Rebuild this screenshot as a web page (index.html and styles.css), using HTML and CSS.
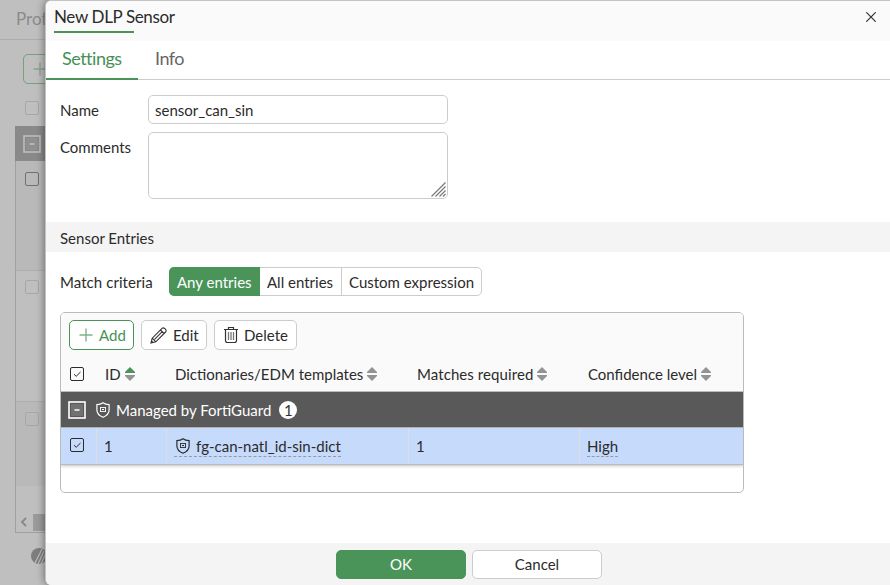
FILE: index.html
```html
<!DOCTYPE html>
<html lang="en">
<head>
    <meta charset="UTF-8">
    <title>New DLP Sensor</title>
    <link rel="stylesheet" href="styles.css">
</head>
<body>
<svg class="symbols">
    <symbol id="tick" viewBox="0 0 14 14">
        <rect x=".5" y=".5" width="13" height="13" rx="1.5" fill="none" stroke="currentColor"/>
        <path d="M4 7.2l2.2 2.1L10.5 5" fill="none" stroke="currentColor"/>
    </symbol>
    <symbol id="box" viewBox="0 0 14 14">
        <rect x=".5" y=".5" width="13" height="13" rx="1.5" fill="none" stroke="currentColor"/>
    </symbol>
    <symbol id="minus" viewBox="0 0 18 18">
        <rect x="3" y="3" width="12" height="12" rx="1" fill="currentColor" opacity=".15"/>
        <rect x="1" y="1" width="16" height="16" fill="none" stroke="currentColor" stroke-width="1.6"/>
        <path d="M6.500 9h5" stroke="currentColor" stroke-width="1.6"/>
    </symbol>
    <symbol id="plus" viewBox="0 0 14 14">
        <path d="M7 .5v13M.5 7h13" stroke="currentColor" stroke-width="1.4"/>
    </symbol>
    <symbol id="shield" viewBox="0 0 14 16">
        <path d="M7 .8C5.3 2.2 3.2 2.7 .9 2.7V8c0 3.6 2.6 5.8 6.1 7.3 3.5-1.5 6.1-3.7 6.1-7.3V2.7C10.8 2.7 8.7 2.2 7 .8z" fill="none" stroke="currentColor" stroke-width="1.2"/>
        <path d="M4.5 5.500h5v4h-5zM4 5l1 1M10 5L9 6M4 10l1-1M10 10L9 9" fill="none" stroke="currentColor" stroke-width=".9"/>
        <path d="M6 7.500h2" stroke="currentColor"/>
    </symbol>
    <symbol id="sort" viewBox="0 0 12 14">
        <path d="M6 0l5 5v1H1V5z"/>
        <path d="M6 14l5-5V8H1v1z"/>
    </symbol>
</svg>

<div class="page">
    <div class="page-title">Prof</div>
    <div class="page-body">
        <div class="page-add"><svg width="14" height="14"><use href="#plus"/></svg></div>
        <div class="page-table">
            <div class="page-head"><svg width="14" height="14"><use href="#box"/></svg></div>
            <div class="page-group"><svg width="18" height="18"><use href="#minus"/></svg></div>
            <div class="page-row current"><svg width="14" height="14"><use href="#box"/></svg></div>
            <div class="page-row middle"><svg width="14" height="14"><use href="#box"/></svg></div>
            <div class="page-row last"><svg width="14" height="14"><use href="#box"/></svg></div>
            <div class="page-scroll">
                <svg width="8" height="10" viewBox="0 0 8 10"><path d="M6 1L2 5l4 4" fill="none" stroke="#888" stroke-width="1.8"/></svg>
                <span class="thumb"></span>
            </div>
        </div>
        <svg class="page-logo" width="16" height="16" viewBox="0 0 16 16">
            <circle cx="8" cy="8" r="8" fill="#7e7e7e"/>
            <path d="M4 15L11 1M7 16l6-13M10 16l5-11" stroke="#bcbcbc" stroke-width="1.2"/>
        </svg>
    </div>
</div>

<form class="panel">
    <div class="panel-header">
        <div class="panel-title">New DLP Sensor</div>
        <svg class="close" width="10" height="10" viewBox="0 0 10 10"><path d="M.3.3l9.4 9.4M9.7.3L.3 9.7" stroke="#333" stroke-width="1.2"/></svg>
    </div>
    <div class="tabs">
        <div class="tab active">Settings</div>
        <div class="tab">Info</div>
    </div>

    <div class="fields">
        <label for="name">Name</label>
        <input type="text" id="name" value="sensor_can_sin">
        <label for="comments">Comments</label>
        <div class="comments-box">
            <textarea id="comments"></textarea>
            <svg class="grip" width="15" height="15" viewBox="0 0 15 15"><path d="M.5 14.5l14-14M4.5 14.5l10-10M8.5 14.5l6-6M12 14.5l2.5-2.5" stroke="#777" stroke-width="1.2"/></svg>
        </div>
    </div>

    <div class="section">Sensor Entries</div>

    <div class="criteria">
        <span class="criteria-label">Match criteria</span>
        <div class="switch">
            <span class="option selected">Any entries</span>
            <span class="option all">All entries</span>
            <span class="option custom">Custom expression</span>
        </div>
    </div>

    <div class="entries">
        <div class="toolbar">
            <div class="button add"><svg width="14" height="14"><use href="#plus"/></svg>Add</div>
            <div class="button edit">
                <svg width="17" height="17" viewBox="0 0 17 17" fill="none" stroke="#333" stroke-width="1.1"><path d="M1 16l1.2-4.8L12 1.4c.8-.8 2-.6 2.8.2l.6.6c.8.8 1 2 .2 2.800L5.8 14.8zM2.2 11.2l3.600 3.6M10.5 3l3.5 3.5M4.5 12.3l7.5-7.5M1 16l2-.5-1.5-1.5z"/></svg>Edit
            </div>
            <div class="button delete">
                <svg width="14" height="16" viewBox="0 0 14 16" fill="none" stroke="#333"><path d="M0 2.5h14M4.5 2.500v-2h5v2M1.5 2.5v11q0 2 2 2h7q2 0 2-2v-11" stroke-width="1.2"/><path d="M4.500 5v8M7 5v8M9.5 5v8" stroke="#777" stroke-width="1.3"/></svg>Delete
            </div>
        </div>
        <div class="row head">
            <div class="cell"><svg width="14" height="14"><use href="#tick"/></svg></div>
            <div class="cell">ID<svg class="sort asc" width="12" height="14" viewBox="0 0 12 14"><path class="up" d="M6 0l5 5v1H1V5z"/><path d="M6 14l5-5V8H1v1z"/></svg></div>
            <div class="cell">Dictionaries/EDM templates<svg class="sort" width="12" height="14"><use href="#sort"/></svg></div>
            <div class="cell matches">Matches required<svg class="sort" width="12" height="14"><use href="#sort"/></svg></div>
            <div class="cell">Confidence level<svg class="sort" width="12" height="14"><use href="#sort"/></svg></div>
        </div>
        <div class="group">
            <svg width="18" height="18"><use href="#minus"/></svg>
            <svg class="shield" width="14" height="16"><use href="#shield"/></svg>
            <span>Managed by FortiGuard</span>
            <span class="count">1</span>
        </div>
        <div class="row data">
            <div class="cell"><svg width="14" height="14"><use href="#tick"/></svg></div>
            <div class="cell">1</div>
            <div class="cell"><span class="ref"><svg width="14" height="16"><use href="#shield"/></svg>fg-can-natl_id-sin-dict</span></div>
            <div class="cell">1</div>
            <div class="cell"><span class="ref">High</span></div>
        </div>
    </div>

    <div class="panel-footer">
        <div class="button ok">OK</div>
        <div class="button cancel">Cancel</div>
    </div>
</form>
</body>
</html>
```
FILE: styles.css
```css
* {
    box-sizing: border-box;
}

body {
    margin: 0;
    height: 585px;
    overflow: hidden;
    position: relative;
    font: 15px/20px Lato, sans-serif;
    color: #2b2b2b;
    background: #bfbfbf;
}

svg {
    flex: none;
    display: block;
}

.symbols {
    display: none;
}

/* dimmed page under the panel */
.page {
    width: 60px;
    height: 585px;
    overflow: hidden;
}

.page-title {
    height: 40px;
    padding: 9px 0 0 16px;
    font-size: 17px;
    color: #8b8b8b;
    border-bottom: 1px solid #adadad;
}

.page-body {
    padding: 14px 0 0 15px;
}

.page-add {
    width: 70px;
    height: 30px;
    margin-left: 8px;
    padding: 7px 9px;
    color: #86a58c;
    border: 1px solid #76a17f;
    border-radius: 5px;
}

.page-table {
    height: 449px;
    border-bottom: 1px solid #a0a0a0;
}

.page-head {
    height: 42px;
    padding: 17px 0 0 10px;
    color: #a7a7a7;
}

.page-group {
    height: 35px;
    padding: 9px 0 0 8px;
    color: #bebebe;
    background: #898989;
}

.page-row {
    padding: 9px 0 0 9px;
    color: #a7a7a7;
    border-left: 1px solid #a0a0a0;
    border-bottom: 1px solid #aeaeae;
}

.page-row.current {
    height: 110px;
    padding-top: 11px;
    color: #707070;
    background: #b9b9b9;
}

.page-row.middle {
    height: 131px;
}

.page-row.last {
    height: 84px;
    padding-top: 10px;
    background: #b9b9b9;
    border-bottom: 0;
}

.page-scroll {
    display: flex;
    align-items: center;
    height: 46px;
    padding: 27px 0 1px 4px;
    border-left: 1px solid #a0a0a0;
}

.thumb {
    width: 30px;
    height: 17px;
    margin-left: 5px;
    background: #9b9b9b;
}

.page-logo {
    margin: 15px 0 0 16px;
}

/* slide-in panel */
.panel {
    position: absolute;
    top: 0;
    right: 0;
    bottom: 0;
    left: 45px;
    display: flex;
    flex-direction: column;
    background: #fff;
    border: 1px solid #c4c4c4;
    border-width: 1px 0 0 1px;
    border-radius: 6px 0 0 6px;
    box-shadow: 0 0 9px rgba(0, 0, 0, .5);
    overflow: hidden;
}

.panel-header {
    display: flex;
    justify-content: space-between;
    height: 40px;
    padding: 6px 14px 0 8px;
    background: #fafafa;
}

.panel-title {
    font-size: 17px;
    letter-spacing: -.35px;
    height: 26px;
    background: linear-gradient(#4a9459, #4a9459) 0 100% / 80px 2px no-repeat;
}

.close {
    margin-top: 5px;
}

.tabs {
    display: flex;
    height: 39px;
    font-size: 18px;
    letter-spacing: -.5px;
    border-bottom: 1px solid #ccc;
}

.tab {
    height: 39px;
    padding: 7px 17px 0;
    color: #666;
}

.tab.active {
    width: 92px;
    padding-left: 16px;
    color: #459155;
    border-bottom: 2px solid #4a9459;
}

.fields {
    display: grid;
    grid-template-columns: 88px 300px;
    row-gap: 8px;
    padding: 15px 14px 23px;
}

.fields label {
    padding-top: 5px;
}

input, textarea {
    display: block;
    width: 300px;
    height: 29px;
    margin: 0;
    padding: 0 7px 0 6px;
    font: inherit;
    color: inherit;
    background: #fff;
    border: 1px solid #ccc;
    border-radius: 5px;
    outline: 0;
    resize: none;
}

textarea {
    height: 67px;
}

.comments-box {
    position: relative;
}

.grip {
    position: absolute;
    right: 2px;
    bottom: 2px;
}

.section {
    height: 30px;
    padding: 6px 14px 0;
    background: #f4f4f4;
}

.criteria {
    display: flex;
    align-items: center;
    padding: 15px 14px 16px;
}

.criteria-label {
    width: 109px;
    letter-spacing: .07px;
}

.switch {
    display: flex;
    height: 29px;
    border: 1px solid #ccc;
    border-radius: 5px;
}

.option {
    padding: 4px 0 0 7px;
    white-space: nowrap;
}

.option.selected {
    width: 91px;
    margin: -1px 0 -1px -1px;
    padding: 5px 0 0 8px;
    color: #fff;
    background: #4a9459;
    border-radius: 5px 0 0 5px;
}

.option.all {
    width: 81px;
}

.option.custom {
    width: 140px;
    border-left: 1px solid #ccc;
}

.entries {
    width: 684px;
    height: 181px;
    margin-left: 14px;
    border: 1px solid #bbb;
    border-radius: 5px;
    overflow: hidden;
}

.toolbar {
    display: flex;
    gap: 7px;
    height: 44px;
    padding: 7px 8px;
    background: #fafafa;
}

.button {
    display: flex;
    align-items: center;
    height: 30px;
    padding: 0 7px 1px;
    background: #fff;
    border: 1px solid #ccc;
    border-radius: 5px;
}

.button svg {
    margin-top: 1px;
}

.add {
    width: 65px;
    padding-left: 9px;
    gap: 6px;
    color: #459155;
    border-color: #4a9459;
}

.add svg {
    color: #7db289;
}

.edit {
    width: 66px;
    padding-left: 8px;
    gap: 6px;
}

.delete {
    width: 83px;
    padding-left: 9px;
    gap: 6px;
}

.row {
    display: grid;
    grid-template-columns: 35px 70px 242px 171px 1fr;
}

.cell {
    display: flex;
    align-items: center;
    padding-left: 9px;
}

.head {
    height: 35px;
    background: #fafafa;
    border-bottom: 1px solid #bbb;
}

.matches {
    letter-spacing: .08px;
}

.sort {
    margin: -1px 0 0 3px;
    fill: #939393;
}

.sort.asc .up {
    fill: #4a9459;
}

.group {
    display: flex;
    align-items: center;
    height: 36px;
    padding-left: 7px;
    color: #fff;
    background: #595959;
    border-bottom: 1px solid #bbb;
}

.shield {
    margin: 0 6px 0 10px;
}

.count {
    width: 18px;
    height: 18px;
    margin-left: 8px;
    line-height: 18px;
    text-align: center;
    color: #333;
    background: #fff;
    border-radius: 9px;
}

.data {
    height: 37px;
    background: #c6dafc;
    border-bottom: 1px solid #bbb;
    box-shadow: 0 1px 3px rgba(0, 0, 0, .25);
}

.data .cell:first-child svg {
    margin-top: -2px;
}

.data .cell + .cell {
    padding-left: 7px;
    border-left: 1px solid #ddd;
}

.ref {
    display: flex;
    align-items: center;
    border-bottom: 1px dashed #999;
}

.ref svg {
    margin: 0 6px 0 2px;
}

.panel-footer {
    display: flex;
    justify-content: center;
    gap: 6px;
    height: 42px;
    margin-top: auto;
    padding: 7px 0 0 2px;
    background: #f4f4f4;
}

.panel-footer .button {
    justify-content: center;
    width: 130px;
    height: 29px;
}

.panel-footer .ok {
    color: #fff;
    background: #4a9459;
    border-color: #4a9459;
}
```
